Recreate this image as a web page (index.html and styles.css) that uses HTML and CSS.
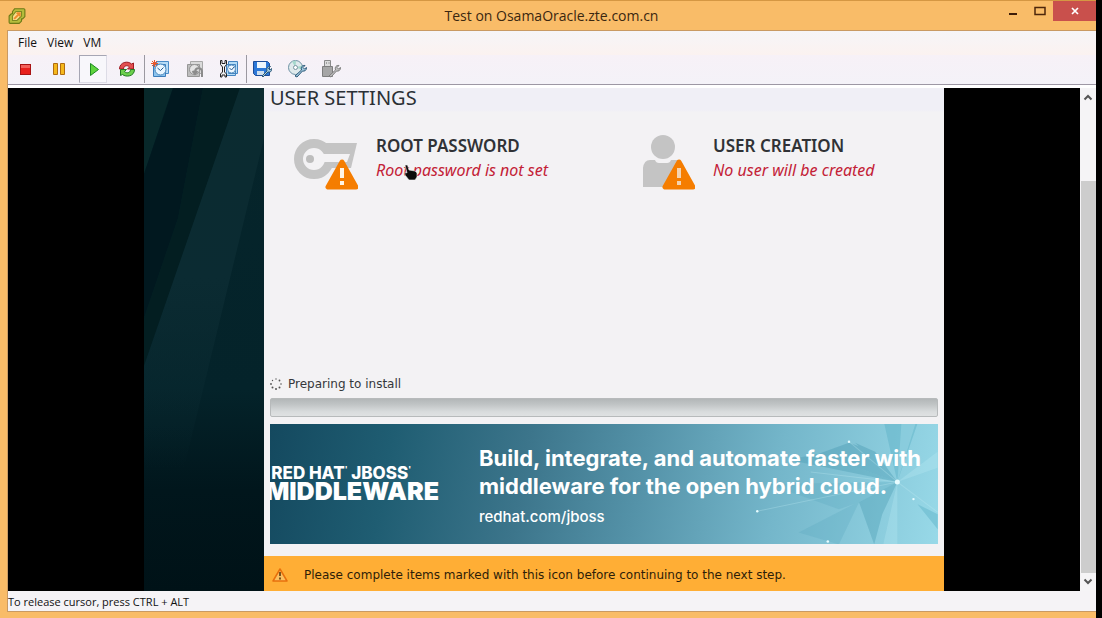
FILE: index.html
```
<!DOCTYPE html>
<html lang="en">
<head>
  <meta charset="UTF-8"/>
  <title>Test on OsamaOracle.zte.com.cn</title>
  <meta name="viewport" content="width=device-width,initial-scale=1"/>
  <link rel="stylesheet" href="styles.css">
</head>
<body>

<div class="window">

  <!-- Title bar -->
  <header class="titlebar">
    <svg class="app-icon" viewBox="0 0 16 16">
      <path d="M6 1.500h8q1 0 1 1v6l-2 2h-1v2l-2 2H2q-1 0-1-1V8l2-2h1V4z" fill="#b5bd3c" stroke="#6d7a16" stroke-linejoin="round"/>
      <path d="M7 4h5v4l-4 4H4V8z" fill="#f8dc8c" stroke="#7f8a20"/>
      <path d="M5.500 10.500l4.500-4.500M7.500 5.500h3v3" fill="none" stroke="#ef8a2c" stroke-width="1.600"/>
    </svg>
    <h1 class="title">Test on OsamaOracle.zte.com.cn</h1>
    <div class="caption-buttons">
      <button class="caption" title="Minimize"><svg width="10" height="10"><path d="M1 8h8" stroke="#3d1c08" stroke-width="2"/></svg></button>
      <button class="caption" title="Maximize"><svg width="12" height="10"><path d="M1 1.500h10v7H1z" fill="none" stroke="#4d260b" stroke-width="1.500"/></svg></button>
      <button class="caption close" title="Close"><svg width="10" height="10"><path d="M2 2l6 6M8 2L2 8" stroke="#fff" stroke-width="1.700"/></svg></button>
    </div>
  </header>

  <div class="client">
    <nav class="menubar">
      <button>File</button>
      <button>View</button>
      <button>VM</button>
    </nav>

    <div class="toolbar">
      <button title="Power off">
        <svg width="20" height="20"><rect x="5.500" y="5.500" width="10" height="10" fill="#e8201c" stroke="#a81414"/><path d="M6 6h9v3H6z" fill="#f4605a"/></svg>
      </button>
      <button title="Suspend">
        <svg width="20" height="20"><path d="M4.500 4.500h4v11h-4zM11.500 4.500h4v11h-4z" fill="#f5b81c" stroke="#b06c10"/></svg>
      </button>
      <button class="active" title="Power on">
        <svg width="20" height="20"><path d="M7.500 4.500v12l8-6z" fill="#5ed43c" stroke="#1e8a22"/></svg>
      </button>
      <button title="Reset">
        <svg width="20" height="20">
          <path d="M2.500 10C2.500 3 11 1.500 14.500 5l2-1v6h-6l2-2C10 5.500 6.500 7 6.500 10z" fill="#e25050" stroke="#a01c24"/>
          <path d="M17.500 10.500C17.500 17.500 9 18.500 5.500 15.500l-2 1v-6h6l-2 2c2.500 2.500 6 1 6-2z" fill="#6cd04c" stroke="#227a24"/>
        </svg>
      </button>
      <button class="group" title="Take snapshot">
        <svg width="20" height="20">
          <path d="M6.500 2.500h12v12h-12z" fill="#b8dcf6" stroke="#4a8cc8"/>
          <path d="M3.500 5.500h12v12h-12z" fill="#8cc4ee" stroke="#3c7cba"/>
          <circle cx="10.500" cy="10.500" r="5.500" fill="#eaf6ff" stroke="#4484bc"/>
          <path d="M7.500 9l3 2.500 3-3" fill="none" stroke="#2c5c90"/>
          <path d="M4.500 1v7M1 4.500h7M2 2l5 5M7 2L2 7" stroke="#e8582c"/>
        </svg>
      </button>
      <button title="Revert snapshot">
        <svg width="20" height="20">
          <path d="M5.500 2.500h12v12h-12z" fill="#dadada" stroke="#a8a8a8"/>
          <path d="M2.500 5.500h12v12h-12z" fill="#bdbdbd" stroke="#979797"/>
          <circle cx="9.500" cy="10.500" r="5" fill="#e4e4e4" stroke="#939393"/>
          <path d="M10 13c0-5 7-5 7 0v5M7.500 12l2.500 3 2.500-3" fill="none" stroke="#8b8b8b" stroke-width="2"/>
        </svg>
      </button>
      <button title="Snapshot manager">
        <svg width="20" height="20">
          <path d="M9.500 2.500h9v12h-9zM7.500 5.500h9v11h-9z" fill="#b4dcf6" stroke="#4484c0"/>
          <circle cx="12.500" cy="10" r="4" fill="#eef8ff" stroke="#5890c0"/>
          <path d="M10.500 9l2 2 2.500-3" fill="none" stroke="#2c5c90"/>
          <path d="M1.500 1.500v4L3.500 8v5l-2 2v3h1.500v-2h3v2h1.500v-3l-2-2V8l2-2.500v-4H6v3H3v-3z" fill="#f4f4f4" stroke="#222"/>
        </svg>
      </button>
      <button class="group" title="Floppy drive">
        <svg width="20" height="20">
          <path d="M1.500 2.500h14l2 2v12h-14l-2-2z" fill="#2c78d8" stroke="#1c4c98"/>
          <path d="M5 3h9v6H5z" fill="#eef6fc"/><path d="M5 12h7v4H5z" fill="#cfe0ee"/>
          <path d="M10 17l5-5c-1-3 1-5 3.500-4.500L16.500 9.500l1.500 1.500 2-1.500c0 3-2 4-4 3.500l-5 5z" fill="#a4cce0" stroke="#2c5878"/>
        </svg>
      </button>
      <button title="CD/DVD drive">
        <svg width="20" height="20">
          <circle cx="8.500" cy="8.500" r="7" fill="#dfeaec" stroke="#6e92a4"/>
          <path d="M8.500 8.500L5 2.500l4-1zM8.500 8.500l6.500-2v4z" fill="#a6d8cc"/>
          <circle cx="8.500" cy="8.500" r="2" fill="#fff" stroke="#7894a0"/>
          <path d="M8 17l6.500-6c-1-3 1-5 3.500-4.500L16 8.500l1.500 1.500 2-1.500c0 3-2 4-4 3.500l-5.500 6z" fill="#a4cce0" stroke="#2c5878"/>
        </svg>
      </button>
      <button title="USB devices">
        <svg width="20" height="20">
          <path d="M3.500 1.500h6v6h-6z" fill="#dcdcdc" stroke="#8a8a8a"/>
          <path d="M1.500 7.500h10v10h-10z" fill="#a6a6a6" stroke="#7e7e7e"/>
          <path d="M5 4h1M7.500 4h1" stroke="#666"/>
          <path d="M8 17l6.500-6c-1-3 1-5 3.500-4.500L16 8.500l1.500 1.500 2-1.500c0 3-2 4-4 3.500l-5.500 6z" fill="#c0c0c0" stroke="#7c7c7c"/>
        </svg>
      </button>
    </div>

    <!-- Guest console -->
    <div class="console">
      <div class="screen">
        <div class="guest">
          <aside class="sidebar">
            <svg viewBox="0 0 120 503" preserveAspectRatio="none">
              <defs>
                <linearGradient id="side" x1="0" y1="0" x2="0" y2="1">
                  <stop offset="0" stop-color="#06252b"/>
                  <stop offset="0.600" stop-color="#04232a"/>
                  <stop offset="0.800" stop-color="#01161c"/>
                  <stop offset="1" stop-color="#001217"/>
                </linearGradient>
                <linearGradient id="ray" x1="0" y1="0" x2="0" y2="1">
                  <stop offset="0" stop-color="#0b2b30"/>
                  <stop offset="0.500" stop-color="#0b2b32"/>
                  <stop offset="1" stop-color="#0b2b32" stop-opacity="0"/>
                </linearGradient>
              </defs>
              <path d="M0 0h120v503H0z" fill="url(#side)"/>
              <path d="M0 0h29L0 86z" fill="#08282a"/>
              <path d="M29 0h30L34 130 0 230V86z" fill="#01181f"/>
              <path d="M59 0h37L0 278v-48L34 130z" fill="#031e21"/>
              <path d="M96 0h24v50L40 380H0V278z" fill="url(#ray)"/>
            </svg>
          </aside>

          <main class="hub">
            <h2 class="hub-title">USER SETTINGS</h2>

            <div class="spokes">
              <a class="spoke" href="#root-password">
                <svg class="spoke-icon" width="64" height="64" viewBox="0 0 64 64">
                  <path d="M32 17h31l-6 25H32z" fill="#c4c4c4"/>
                  <circle cx="20" cy="33" r="15.500" fill="#f3f2f4" stroke="#c4c4c4" stroke-width="9"/>
                  <path d="M28 28h28l-3 8H28z" fill="#f3f2f4"/>
                  <circle cx="16" cy="33" r="4" fill="#bdbdbd"/>
                  <path d="M48 36L34 61h28z" fill="#f57d00" stroke="#f57d00" stroke-width="5" stroke-linejoin="round"/>
                  <path d="M48 42v10M48 55v4" stroke="#fff5e6" stroke-width="4"/>
                </svg>
                <span class="spoke-text">
                  <span class="spoke-name">ROOT PASSWORD</span>
                  <span class="spoke-status">Root password is not set</span>
                </span>
                <svg class="pointer" width="14" height="16">
                  <path d="M1 1h2.500l1.500 5 6 1 2 2v4l-2 3H5l-4-5V8l2 1z" fill="#0b0b0b" stroke="#eee" stroke-width="0.600"/>
                </svg>
              </a>
              <a class="spoke" href="#user-creation">
                <svg class="spoke-icon" width="64" height="64" viewBox="0 0 64 64">
                  <circle cx="32" cy="21" r="12" fill="#c4c4c4"/>
                  <path d="M12 61V42q1-8 7-8h5q1 3 4 3h8q3 0 4-3h6q6 0 7 8v19z" fill="#c4c4c4"/>
                  <path d="M48 36L34 61h28z" fill="#f57d00" stroke="#f57d00" stroke-width="5" stroke-linejoin="round"/>
                  <path d="M48 42v10M48 55v4" stroke="#f4d3b0" stroke-width="4"/>
                </svg>
                <span class="spoke-text">
                  <span class="spoke-name">USER CREATION</span>
                  <span class="spoke-status">No user will be created</span>
                </span>
              </a>
            </div>

            <div class="install">
              <div class="install-label">
                <svg width="12" height="12" viewBox="0 0 12 12" fill="#555">
                  <circle cx="6" cy="1" r="0.700"/><circle cx="9.500" cy="2.500" r="0.900"/><circle cx="11" cy="6" r="0.800"/><circle cx="9.500" cy="9.500" r="1"/>
                  <circle cx="6" cy="11" r="1"/><circle cx="2.500" cy="9.500" r="1"/><circle cx="1" cy="6" r="0.900"/><circle cx="2.500" cy="2.500" r="0.700"/>
                </svg>
                <span id="install-status">Preparing to install</span>
              </div>
              <div class="progress" role="progressbar" aria-labelledby="install-status"></div>
            </div>

            <section class="banner">
              <svg class="banner-art" viewBox="0 0 338 120" preserveAspectRatio="xMaxYMid slice">
                <path d="M298 58L220 30l30-11 26 9zM298 58l-42-39 20 9z" fill="#3f93ab" opacity="0.350"/>
                <path d="M298 58L190 36l30-6zM298 58l-38 20 15 42 8-30z" fill="#4597ae" opacity="0.350"/>
                <path d="M298 58L170 60l70 25 20-7zM298 58l-98 50 40 12 20-42z" fill="#55a5ba" opacity="0.250"/>
                <path d="M298 58L285 0h33zM318 80l20 25v-15z" fill="#55adc2" opacity="0.400"/>
                <path d="M298 58L302 0h14zM298 58l40-30v16zM298 58l-14 62h14z" fill="#c4f0f6" opacity="0.250"/>
                <path d="M298 58L159 87M298 58L250 18M298 58l40 30M298 58l-86-10" stroke="#c0ecf4" opacity="0.300"/>
                <g fill="#e8fcff"><circle cx="298" cy="58" r="2.500"/><circle cx="250" cy="18" r="1.200"/><circle cx="159" cy="87" r="1.200"/><circle cx="314" cy="75" r="1.200"/><circle cx="229" cy="117" r="1.300"/></g>
              </svg>
              <div class="brand">
                <span class="brand-top">RED HAT<sup>'</sup> JBOSS<sup>'</sup></span>
                <span class="brand-name">MIDDLEWARE</span>
              </div>
              <div class="pitch">
                <p class="pitch-line">Build, integrate, and automate faster with middleware for the open hybrid cloud.</p>
                <a class="pitch-link" href="#jboss">redhat.com/jboss</a>
              </div>
            </section>

            <footer class="notice">
              <svg width="18" height="16" viewBox="0 0 18 16">
                <path d="M9 2L2 14h14z" fill="#fbc060" stroke="#e8700c" stroke-width="1.500" stroke-linejoin="round"/>
                <path d="M9 5v4M9 10.500v2" stroke="#5b3a10" stroke-width="1.600"/>
              </svg>
              <span>Please complete items marked with this icon before continuing to the next step.</span>
            </footer>
          </main>
        </div>
      </div>

      <div class="scrollbar">
        <button title="Scroll up"><svg width="10" height="8"><path d="M1.500 6.500L5 3l3.500 3.500" fill="none" stroke="#555" stroke-width="2"/></svg></button>
        <div class="track"><div class="thumb"></div></div>
        <button title="Scroll down"><svg width="10" height="8"><path d="M1.500 1.500L5 5l3.500-3.500" fill="none" stroke="#555" stroke-width="2"/></svg></button>
      </div>
    </div>

    <div class="statusbar">To release cursor, press CTRL + ALT</div>
  </div>
</div>

</body>
</html>
```
FILE: styles.css
```
* {
  box-sizing: border-box;
}
html, body {
  margin: 0; padding: 0; overflow: hidden; background: #000;
}
body {
  height: 100vh;
  padding-right: 6px;
  font-family: "Noto Sans", "Open Sans", sans-serif;
}
button {
  margin: 0; padding: 0;
  border: none;
  background: transparent;
  font: inherit;
  color: inherit;
}
a {
  color: inherit;
  text-decoration: none;
}
svg {
  display: block;
}

.window {
  height: 100%;
  display: flex;
  flex-direction: column;
  padding: 0 0 6px 7px;
  background: #f9bc68;
  border-top: 1px solid #d59743;
}

/* Title bar */
.titlebar {
  display: grid;
  grid-template-columns: 1fr auto 1fr;
  height: 29px;
  align-items: center;
}
.app-icon {
  width: 18px; height: 18px;
  margin-left: 1px;
}
.title {
  margin: 0;
  font: 14px/28px "Open Sans", "Noto Sans", sans-serif;
  color: #3b2710;
}
.caption-buttons {
  display: flex;
  justify-content: flex-end;
  align-self: start;
}
.caption {
  width: 27px; height: 20px;
  display: flex;
  align-items: center;
  justify-content: center;
}
.close {
  width: 43px;
  background: #c9504c;
}

/* Menu and toolbar */
.client {
  flex: 1;
  min-height: 0;
  display: flex;
  flex-direction: column;
  background: #f5f3f6;
  border: 1px solid #c99a63;
  border-right: none;
}
.menubar {
  display: flex;
  gap: 10px;
  height: 24px;
  padding-left: 10px;
  font: 12px/24px "Open Sans", "Noto Sans", sans-serif;
  color: #111;
  background: linear-gradient(#f6f5f8, #fbf2f0);
}
.toolbar {
  display: flex;
  height: 30px;
  background: linear-gradient(#f7f1f7, #f4f2f8);
  border-bottom: 1px solid #9d97a4;
}
.toolbar button {
  width: 34px; height: 28px;
  display: flex;
  align-items: center;
  justify-content: center;
}
.toolbar .active {
  width: 28px;
  margin: 0 3px;
  background: #f8f7fb;
  border: 1px solid #dddce6;
  border-top-color: #a6a6b4;
  border-left-color: #a6a6b4;
}
.toolbar .group {
  padding-right: 4px;
  border-left: 1px solid #9b98a0;
}

/* Console */
.console {
  flex: 1;
  min-height: 0;
  display: flex;
  padding-top: 3px;
  background: #fff;
}
.screen {
  flex: 1;
  display: flex;
  justify-content: center;
  background: #000;
}
.guest {
  display: flex;
  width: 100%;
  max-width: 800px;
}
.sidebar {
  flex: 0 0 15%;
}
.sidebar svg {
  width: 100%; height: 100%;
}
.hub {
  flex: 1;
  display: flex;
  flex-direction: column;
  background: linear-gradient(#f0eff6 22px, #f3f2f4 24px, #f3f2f4 94%, #f1eef8);
}
.hub-title {
  margin: 0 0 18px;
  padding-left: 6px;
  font: 20px/20px "Noto Sans", sans-serif;
  color: #2b3035;
}
.spokes {
  display: grid;
  grid-template-columns: 1fr 1fr;
  gap: 6px;
  margin: 0 6px;
}
.spoke {
  position: relative;
  display: flex;
  gap: 18px;
  padding-left: 24px;
}
.spoke-icon {
  flex: none;
}
.spoke-text {
  display: flex;
  flex-direction: column;
  padding-top: 8px;
  line-height: 24px;
  white-space: nowrap;
}
.spoke-name {
  font-size: 17px;
  font-weight: 600;
  color: #303236;
}
.spoke-status {
  font-size: 16px;
  font-style: italic;
  color: #c32136;
}
.pointer {
  position: absolute;
  top: 38px; left: 134px;
}

/* Progress */
.install {
  margin: auto 6px 7px;
}
.install-label {
  display: flex;
  align-items: center;
  gap: 6px;
  height: 28px;
  font: 12px/28px "DejaVu Sans", sans-serif;
  color: #35373b;
}
.progress {
  height: 19px;
  border: 1px solid #b7babb;
  border-radius: 2px;
  background: linear-gradient(#b3b7b8, #bfc3c4 30%, #d9dcdd 75%, #dfe1e2);
}

/* Banner */
.banner {
  position: relative;
  display: flex;
  justify-content: space-between;
  height: 120px;
  margin: 0 6px 12px;
  overflow: hidden;
  color: #fff;
  background: linear-gradient(100deg, #14495f, #1f5d72 18%, #3c758b 38%, #5492a8 55%, #74b6ca 75%, #98d9e8);
}
.banner-art {
  position: absolute;
  top: 0; right: 0;
  width: 51%; height: 100%;
}
.brand {
  display: flex;
  flex-direction: column;
  align-items: flex-end;
  width: 169px;
  padding-top: 40px;
  font-family: Inter, sans-serif;
  white-space: nowrap;
}
.brand-top {
  margin-right: 28px;
  font-size: 17px;
  line-height: 18px;
  font-weight: 800;
}
.brand-top sup {
  font-size: 8px;
  line-height: 0;
}
.brand-name {
  font-size: 25px;
  line-height: 18px;
  font-weight: 900;
}
.pitch {
  position: relative;
  width: 459px;
  padding-top: 20px;
  font-family: Inter, sans-serif;
}
.pitch-line {
  margin: 0;
  font-size: 22px;
  line-height: 28px;
  font-weight: 700;
}
.pitch-link {
  display: block;
  margin-top: 6px;
  font: 500 15px/22px Inter, sans-serif;
}

/* Notice */
.notice {
  display: flex;
  align-items: center;
  gap: 15px;
  height: 35px;
  padding: 2px 7px 0;
  font: 12px/20px "DejaVu Sans", sans-serif;
  color: #2e1d08;
  background: #ffae35;
}

/* Scrollbar */
.scrollbar {
  width: 16px;
  display: flex;
  flex-direction: column;
  background: #f5f4f6;
}
.scrollbar button {
  height: 18px;
  display: flex;
  align-items: center;
  justify-content: center;
}
.track {
  flex: 1;
  display: flex;
  flex-direction: column;
  justify-content: flex-end;
}
.thumb {
  height: 84%;
  margin-left: 1px;
  background: #cdcdcd;
}

.statusbar {
  height: 20px;
  font: 11px/21px "Open Sans", "Noto Sans", sans-serif;
  color: #111;
}
```
